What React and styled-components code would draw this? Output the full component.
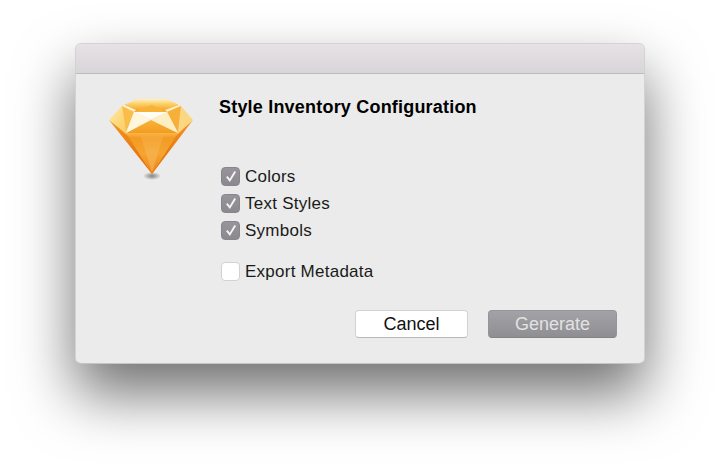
import React from "react";
import styled, { createGlobalStyle } from "styled-components";

const Global = createGlobalStyle`
  html, body {
    margin: 0;
    background: #fff;
    font-family: "Liberation Sans", Arial, sans-serif;
  }
`;

const options = [
  { label: "Colors", checked: true },
  { label: "Text Styles", checked: true },
  { label: "Symbols", checked: true },
];

function Gem() {
  return (
    <GemSvg viewBox="100 92 100 92" width="100" height="92">
      <defs>
        <linearGradient id="body" x1="0" y1="0" x2="0" y2="1">
          <stop offset="0" stopColor="#fbb746" />
          <stop offset="0.12" stopColor="#f29a24" />
          <stop offset="0.5" stopColor="#f5a532" />
          <stop offset="1" stopColor="#ec8414" />
        </linearGradient>
        <linearGradient id="centre" x1="0" y1="0" x2="0" y2="1">
          <stop offset="0" stopColor="#f7ad3f" />
          <stop offset="1" stopColor="#f9c777" />
        </linearGradient>
        <linearGradient id="edge" x1="0" y1="0" x2="0" y2="1">
          <stop offset="0" stopColor="#f4931f" />
          <stop offset="1" stopColor="#dd6c0a" />
        </linearGradient>
        <linearGradient id="middle" x1="0" y1="0" x2="0" y2="1">
          <stop offset="0" stopColor="#f9b437" />
          <stop offset="1" stopColor="#f29c22" />
        </linearGradient>
        <linearGradient id="crown" x1="0" y1="0" x2="0" y2="1">
          <stop offset="0" stopColor="#fff0bb" />
          <stop offset="0.45" stopColor="#fbca5e" />
          <stop offset="1" stopColor="#f29a20" />
        </linearGradient>
        <linearGradient id="side" x1="0" y1="0" x2="1" y2="1">
          <stop offset="0" stopColor="#ffeaa6" />
          <stop offset="1" stopColor="#fbcc5c" />
        </linearGradient>
        <radialGradient id="drop">
          <stop offset="0" stopColor="#000" stopOpacity="0.45" />
          <stop offset="1" stopColor="#000" stopOpacity="0" />
        </radialGradient>
      </defs>
      <ellipse cx="152" cy="176" rx="9" ry="4" fill="url(#drop)" />
      {/* lower body */}
      <polygon points="109,120 126,133 178,133 193,120 152,174" fill="url(#edge)" />
      <polygon points="126,133 178,133 152,174" fill="url(#body)" />
      <polygon points="140,134 164,134 152,172" fill="url(#centre)" opacity="0.5" />
      <polygon points="109,120 126,133 128,136" fill="#fabb52" />
      <polygon points="193,120 178,133 176,136" fill="#fabb52" />
      {/* crown */}
      <polygon points="122,106 137,99 167,99 181,106 167,112 134,112" fill="url(#crown)" />
      <polygon points="151.5,105 134,112 167,112" fill="#f8b236" />
      <polygon points="122,106 134,112 136,110 124,105" fill="#fff4d2" />
      <polygon points="181,106 167,112 165,110 179,105" fill="#fff0c4" />
      <polygon points="109,120 122,106 126,133" fill="url(#side)" />
      <polygon points="122,106 134,112 126,133" fill="#f9bd48" />
      <polygon points="193,120 181,106 178,133" fill="#fcd781" />
      <polygon points="181,106 167,112 178,133" fill="#f6b03a" />
      <polygon points="151,120 126,133 178,133" fill="url(#middle)" />
      {/* white bowtie in the middle */}
      <polygon points="134,112 167,112 151,119" fill="#fffdf6" />
      <polygon points="134,112 151,119.5 126,133" fill="#fff6dc" />
      <polygon points="167,112 151,119.5 178,133" fill="#ffeebf" />
    </GemSvg>
  );
}

function CheckRow({ label, checked }) {
  return (
    <Row>
      <Box $checked={checked}>
        {checked && (
          <svg width="14" height="14" viewBox="0 0 14 14">
            <path
              d="M2.8 7.6 L5.8 11.4 L11.2 2.4"
              fill="none"
              stroke="#f4f4f4"
              strokeWidth="1.9"
            />
          </svg>
        )}
      </Box>
      <Label>{label}</Label>
    </Row>
  );
}

export default function App() {
  return (
    <Page>
      <Global />
      <Dialog>
        <TitleBar />
        <Body>
          <IconColumn>
            <Gem />
          </IconColumn>
          <Content>
            <Title>Style Inventory Configuration</Title>
            <Checks>
              {options.map((o) => (
                <CheckRow key={o.label} {...o} />
              ))}
            </Checks>
            <Metadata>
              <CheckRow label="Export Metadata" checked={false} />
            </Metadata>
            <Buttons>
              <CancelButton>Cancel</CancelButton>
              <GenerateButton>Generate</GenerateButton>
            </Buttons>
          </Content>
        </Body>
      </Dialog>
    </Page>
  );
}

const Page = styled.div`
  width: 720px;
  height: 472px;
  box-sizing: border-box;
  padding: 43px 0 0 75px;
  overflow: hidden;
  background: #fff;
`;

const Dialog = styled.div`
  width: 570px;
  height: 321px;
  box-sizing: border-box;
  display: flex;
  flex-direction: column;
  background: #ebebeb;
  border-radius: 6px;
  border: 1px solid #d4d2d4;
  border-bottom-color: #c4c4c4;
  box-shadow: 0 30px 58px rgba(0, 0, 0, 0.56);
`;

const TitleBar = styled.div`
  height: 29px;
  flex: none;
  border-radius: 5px 5px 0 0;
  border-bottom: 1px solid #bcbabc;
  background: linear-gradient(#e6e2e6, #d8d5d9);
`;

const Body = styled.div`
  flex: 1;
  display: flex;
`;

const IconColumn = styled.div`
  width: 143px;
  flex: none;
  padding: 18px 0 0 24px;
  box-sizing: border-box;
`;

const GemSvg = styled.svg`
  display: block;
`;

const Content = styled.div`
  flex: 1;
  padding: 23px 27px 0 0;
  display: flex;
  flex-direction: column;
`;

const Title = styled.div`
  font-size: 18px;
  font-weight: 700;
  line-height: 20px;
  letter-spacing: 0.2px;
  color: #000;
`;

const Checks = styled.div`
  margin-top: 49px;
  display: flex;
  flex-direction: column;
  gap: 7px;
`;

const Metadata = styled.div`
  margin-top: 21px;
`;

const Row = styled.div`
  display: flex;
  align-items: center;
  gap: 5px;
  height: 20px;
  padding-left: 2px;
`;

const Box = styled.div`
  width: 19px;
  height: 19px;
  box-sizing: border-box;
  border-radius: 4px;
  display: flex;
  align-items: center;
  justify-content: center;
  background: ${(p) => (p.$checked ? "linear-gradient(#97959b, #8b898f)" : "#fff")};
  border: 1px solid ${(p) => (p.$checked ? "#88868c" : "#d2d2d2")};
`;

const Label = styled.span`
  padding-top: 2px;
  font-size: 17px;
  line-height: 20px;
  letter-spacing: 0.25px;
  color: #1a1a1a;
`;

const Buttons = styled.div`
  margin-top: 29px;
  display: flex;
  justify-content: flex-end;
  gap: 20px;
`;

const CancelButton = styled.button`
  width: 113px;
  height: 28px;
  padding: 0;
  box-sizing: border-box;
  border-radius: 4px;
  font: 18px "Liberation Sans", Arial, sans-serif;
  color: #111;
  background: #fff;
  border: 1px solid #d2d2d2;
  border-bottom-color: #b9b9b9;
`;

const GenerateButton = styled.button`
  width: 129px;
  height: 28px;
  padding: 0;
  box-sizing: border-box;
  border-radius: 4px;
  font: 18px "Liberation Sans", Arial, sans-serif;
  color: #e2e2e2;
  background: linear-gradient(#a3a2a6, #8f8e92);
  border: 1px solid #959498;
  border-bottom-color: #828185;
`;
